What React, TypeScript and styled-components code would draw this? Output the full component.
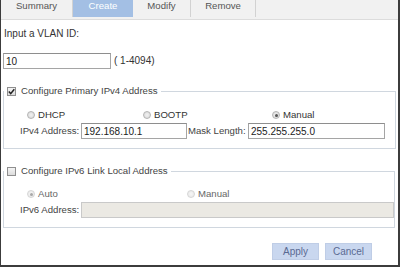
import React from "react";
import styled, { createGlobalStyle } from "styled-components";

const Global = createGlobalStyle`
  html, body { margin: 0; padding: 0; background: #fff; }
  body { font-family: "Liberation Sans", Arial, sans-serif; font-size: 10px; color: #333; }
  * { box-sizing: border-box; }
`;

const Frame = styled.div`
  width: 400px;
  height: 267px;
  overflow: hidden;
  background: #fff;
  border-left: 1px solid #3c3c3c;
  border-right: 2px solid #3c3c3c;
  border-bottom: 2px solid #3c3c3c;
  display: flex;
  flex-direction: column;
`;

const TabBar = styled.div`
  height: 20px;
  flex: none;
  display: flex;
  align-items: flex-start;
  background: #f1f1f1;
  border-bottom: 1px solid #dcdcdc;
`;

const Tab = styled.div<{ $w: number; $active?: boolean; $sep?: boolean }>`
  width: ${(p) => p.$w}px;
  height: 17px;
  line-height: 12px;
  font-size: 9.6px;
  text-align: center;
  color: ${(p) => (p.$active ? "#fff" : "#555")};
  background: ${(p) => (p.$active ? "#a3bfe4" : "transparent")};
  border-right: ${(p) => (p.$sep ? "1px solid #d2d2d2" : "none")};
`;

const Content = styled.div`
  padding-left: 2px;
  display: flex;
  flex-direction: column;
`;

const Title = styled.div`
  margin-top: 8px;
  line-height: 12px;
  padding-left: 1px;
`;

const InputRow = styled.div`
  margin-top: 13px;
  display: flex;
  align-items: center;
  gap: 3px;
`;

const TextInput = styled.input<{ $w: number }>`
  width: ${(p) => p.$w}px;
  height: 16px;
  margin: 0;
  padding: 0 2px;
  border: 1px solid #a5a5a5;
  border-top-color: #8e8e8e;
  background: #fff;
  font-family: "Liberation Sans", Arial, sans-serif;
  font-size: 10px;
  color: #222;
  outline: none;
  &:disabled {
    background: #ebe9e3;
    border-color: #c9c9c9;
  }
`;

const Hint = styled.span`
  line-height: 12px;
`;

const Group = styled.fieldset<{ $mt: number; $w: number }>`
  margin: ${(p) => p.$mt}px 0 0;
  width: ${(p) => p.$w}px;
  min-width: 0;
  padding: 0 0 9px;
  border: 1px solid #d0d7df;
`;

const Legend = styled.legend`
  padding: 0 3px 0 3px;
  margin: 0;
`;

const LegendLabel = styled.label`
  display: flex;
  align-items: center;
  gap: 5px;
  line-height: 12px;
  font-size: 9.6px;
  color: #444;
`;

const Box = styled.span<{ $checked?: boolean }>`
  width: 9px;
  height: 9px;
  flex: none;
  border: 1px solid #8f8f8f;
  background: linear-gradient(#f4f4f4, #dcdcdc);
  display: flex;
  align-items: center;
  justify-content: center;
`;

const RadioRow = styled.div<{ $cols: string; $mt: number }>`
  display: grid;
  grid-template-columns: ${(p) => p.$cols};
  padding-left: 23px;
  margin-top: ${(p) => p.$mt}px;
  line-height: 12px;
`;

const RadioItem = styled.label<{ $disabled?: boolean }>`
  display: flex;
  align-items: center;
  gap: 3px;
  font-size: 9.6px;
  color: ${(p) => (p.$disabled ? "#666" : "#333")};
`;

const Radio = styled.span<{ $checked?: boolean; $disabled?: boolean }>`
  width: 8px;
  height: 8px;
  flex: none;
  border-radius: 50%;
  border: 1px solid ${(p) => (p.$disabled ? "#d6d6d6" : "#b4b4b4")};
  background: ${(p) =>
    p.$disabled ? "radial-gradient(#f6f6f6, #e6e6e6)" : "radial-gradient(#f2f2f2, #d6d6d6)"};
  display: flex;
  align-items: center;
  justify-content: center;
  &::after {
    content: "";
    display: ${(p) => (p.$checked ? "block" : "none")};
    width: 3px;
    height: 3px;
    border-radius: 50%;
    background: ${(p) => (p.$disabled ? "#a8a8a8" : "#555")};
  }
`;

const FieldRow = styled.div`
  display: flex;
  align-items: center;
  padding-left: 16px;
  margin-top: 2px;
  height: 16px;
`;

const FieldLabel = styled.label<{ $w: number; $ml?: number }>`
  width: ${(p) => p.$w}px;
  margin-left: ${(p) => p.$ml ?? 0}px;
  flex: none;
  white-space: nowrap;
  font-size: 9.6px;
  color: #444;
  line-height: 12px;
`;

const ButtonRow = styled.div`
  margin-top: 15px;
  padding-right: 26px;
  display: flex;
  justify-content: flex-end;
  gap: 6px;
`;

const Button = styled.button`
  width: 47px;
  height: 17px;
  margin: 0;
  padding: 0;
  border: 1px solid #bfcde6;
  background: #c9d7ef;
  color: #5a6a92;
  font-family: "Liberation Sans", Arial, sans-serif;
  font-size: 10px;
`;

const Check = () => (
  <svg width="7" height="7" viewBox="0 0 7 7">
    <path d="M0.8 3.6 L2.7 5.6 L6.3 1.2" fill="none" stroke="#222" strokeWidth="1.5" />
  </svg>
);

export default function App() {
  return (
    <>
      <Global />
      <Frame>
        <TabBar>
          <Tab $w={72} $sep>Summary</Tab>
          <Tab $w={60} $active>Create</Tab>
          <Tab $w={58} $sep>Modify</Tab>
          <Tab $w={65} $sep>Remove</Tab>
        </TabBar>
        <Content>
          <Title>Input a VLAN ID:</Title>
          <InputRow>
            <TextInput $w={108} defaultValue="10" />
            <Hint>( 1-4094)</Hint>
          </InputRow>

          <Group $mt={16} $w={393}>
            <Legend>
              <LegendLabel>
                <Box $checked>
                  <Check />
                </Box>
                Configure Primary IPv4 Address
              </LegendLabel>
            </Legend>
            <RadioRow $cols="116px 129px auto" $mt={12}>
              <RadioItem>
                <Radio />
                DHCP
              </RadioItem>
              <RadioItem>
                <Radio />
                BOOTP
              </RadioItem>
              <RadioItem>
                <Radio $checked />
                Manual
              </RadioItem>
            </RadioRow>
            <FieldRow>
              <FieldLabel $w={61}>IPv4 Address:</FieldLabel>
              <TextInput $w={106} defaultValue="192.168.10.1" />
              <FieldLabel $w={60} $ml={1}>Mask Length:</FieldLabel>
              <TextInput $w={137} defaultValue="255.255.255.0" />
            </FieldRow>
          </Group>

          <Group $mt={16} $w={392}>
            <Legend>
              <LegendLabel>
                <Box />
                Configure IPv6 Link Local Address
              </LegendLabel>
            </Legend>
            <RadioRow $cols="160px auto" $mt={11}>
              <RadioItem $disabled>
                <Radio $checked $disabled />
                Auto
              </RadioItem>
              <RadioItem $disabled>
                <Radio $disabled />
                Manual
              </RadioItem>
            </RadioRow>
            <FieldRow>
              <FieldLabel $w={61}>IPv6 Address:</FieldLabel>
              <TextInput $w={313} disabled />
            </FieldRow>
          </Group>

          <ButtonRow>
            <Button>Apply</Button>
            <Button>Cancel</Button>
          </ButtonRow>
        </Content>
      </Frame>
    </>
  );
}
